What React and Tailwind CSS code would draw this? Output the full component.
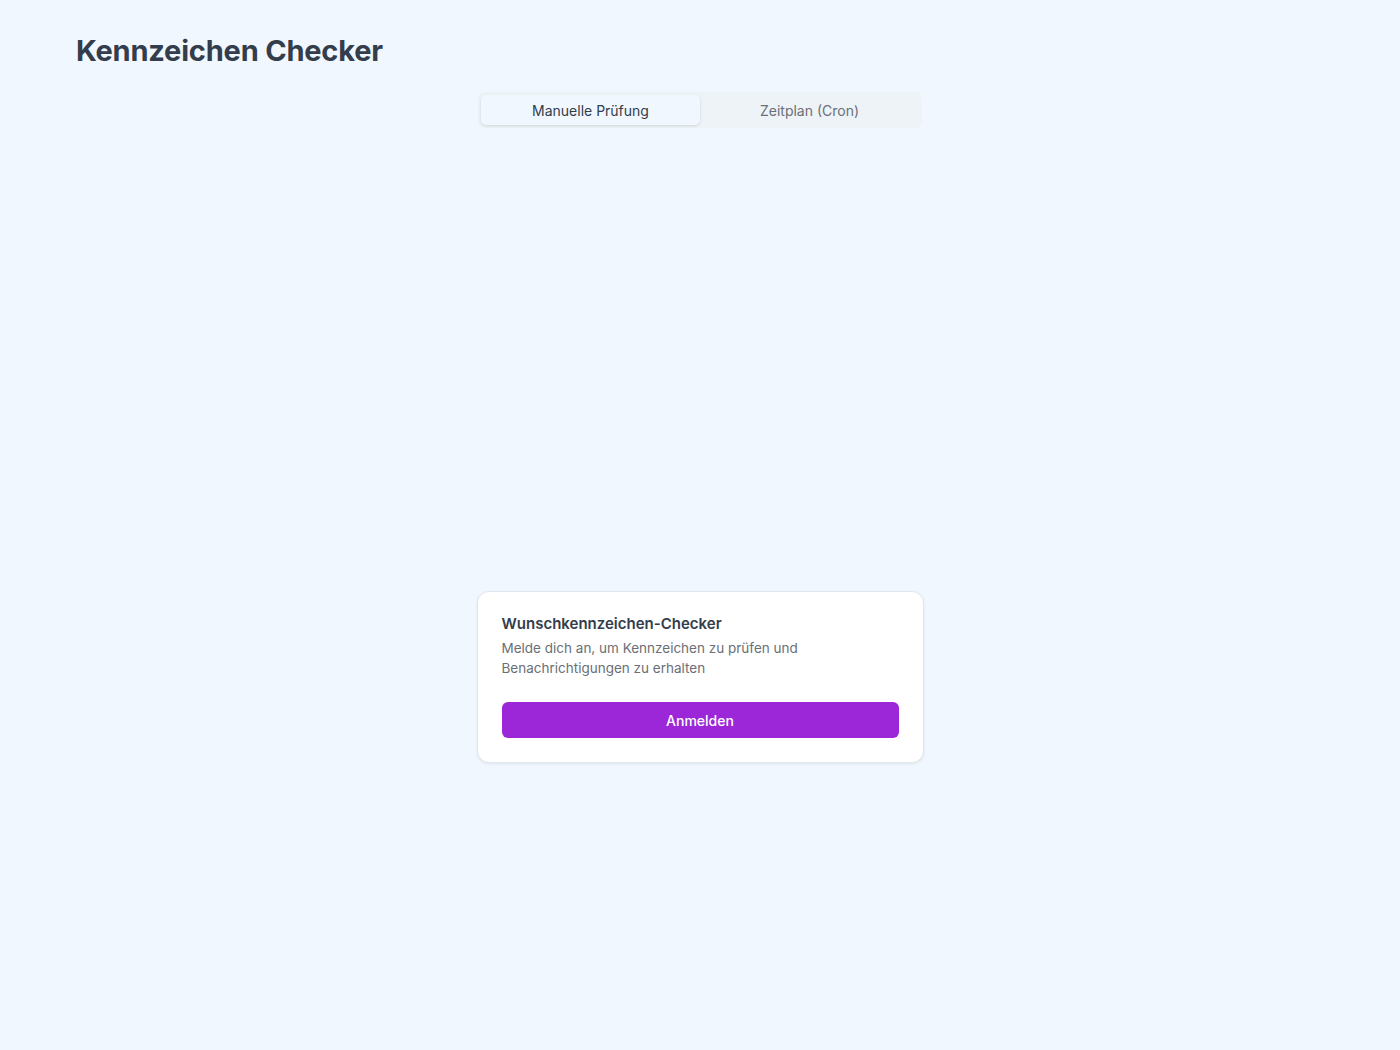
export default function App() {
  return (
    <div
      className="min-h-screen bg-[#f0f7ff] text-[#333d4b]"
      style={{ fontFamily: 'Inter, "Noto Sans", sans-serif' }}
    >
      <div className="px-[76px] pt-[33px]">
        <h1 className="text-[29px] font-bold leading-[36px] tracking-[-0.2px] text-[#333d4b]">
          Kennzeichen Checker
        </h1>
      </div>

      <div className="mt-[23px] flex justify-center">
        <div className="grid w-[444px] grid-cols-2 rounded-md bg-[#eef3f8] p-[3px]">
          <button
            type="button"
            className="h-[30px] rounded-[5px] bg-[#f0f7ff] text-[14px] text-[#333d4b] shadow-[0_1px_3px_rgba(0,0,0,0.12)]"
          >
            Manuelle Prüfung
          </button>
          <button type="button" className="h-[30px] text-[14px] text-[#6b6f76]">
            Zeitplan (Cron)
          </button>
        </div>
      </div>

      <div className="mt-[463px] flex justify-center">
        <div className="w-[447px] rounded-xl border border-[#e3e6ea] bg-white px-6 pb-6 pt-[22px] shadow-[0_1px_3px_rgba(0,0,0,0.08)]">
          <h2 className="text-[15px] font-semibold leading-[20px] text-[#333d4b]">
            Wunschkennzeichen-Checker
          </h2>
          <p className="mt-[4px] text-[13.5px] leading-[20px] text-[#6b6f76]">
            Melde dich an, um Kennzeichen zu prüfen und
            <br />
            Benachrichtigungen zu erhalten
          </p>
          <button
            type="button"
            className="mt-[24px] h-[36px] w-full rounded-md bg-[#9b27d9] text-[14px] font-medium text-white"
          >
            Anmelden
          </button>
        </div>
      </div>
    </div>
  );
}
